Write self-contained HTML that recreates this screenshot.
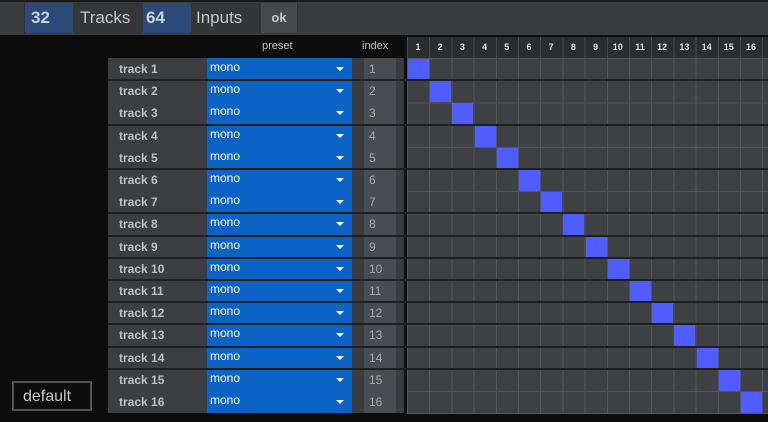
<html><head><style>
body{margin:0;width:768px;height:422px;background:#0c0c0c;position:relative;overflow:hidden;font-family:"Liberation Sans",sans-serif}
.a{position:absolute}
.top{left:0;top:0;width:768px;height:35px;background:#3a3b3d;border-top:2px solid #1a1a1a;box-sizing:border-box}
.box{top:3px;height:30px;font-size:17px;line-height:30px;color:#c8c8c8}
.grid{left:407px;top:58px;width:361px;height:356px;background-color:#3e4044;
background-image:repeating-linear-gradient(90deg,#54565a 0 1px,transparent 1px 22.2px),repeating-linear-gradient(180deg,#54565a 0 1px,transparent 1px 22.2px)}
.hd{left:407px;top:37px;width:361px;height:21px;background:#2c2d2f;
background-image:repeating-linear-gradient(90deg,#4a4b4d 0 1px,transparent 1px 22.2px)}
.hn{top:37px;width:22px;height:21px;line-height:21px;text-align:center;color:#e0e0e0;font-size:9px;font-weight:bold}
.r{left:108px;width:296px;height:22.2px;font-size:12px;line-height:22px}
.n{left:0;width:99px;height:100%;background:#3c3e42;color:#c0c0c0;font-weight:bold;padding-left:11px;box-sizing:border-box}
.p{left:99px;width:145px;height:100%;background:#0b63c6;color:#fff;padding-left:3px;box-sizing:border-box;line-height:19px}
.p:after{content:"";position:absolute;right:8px;top:9px;border-left:4px solid transparent;border-right:4px solid transparent;border-top:4px solid #fff}
.g{left:244px;width:12px;height:100%;background:#3a3c40}
.i{left:256px;width:32px;height:100%;background:#4a4c52;color:#aaa;padding-left:5px;box-sizing:border-box}
.e{left:288px;width:8px;height:100%;background:#3a3c40}
.sep{left:108px;width:660px;height:2px;background:#1e1f21}
.b{width:21px;height:21px;background:#4f5cff}
</style></head><body>
<div class="a top"></div>
<div class="a" style="left:24px;top:3px;width:274px;height:30px;background:#2f3032"></div>
<div class="a box" style="left:25px;width:48px;background:#2c4a78;color:#c8d0dc;font-weight:bold;padding-left:6px;box-sizing:border-box">32</div>
<div class="a box" style="left:73px;width:70px;background:#343638;padding-left:7px;box-sizing:border-box">Tracks</div>
<div class="a box" style="left:143px;width:48px;background:#2c4a78;color:#c8d0dc;font-weight:bold;padding-left:3px;box-sizing:border-box">64</div>
<div class="a box" style="left:191px;width:68px;background:#343638;padding-left:5px;box-sizing:border-box">Inputs</div>
<div class="a box" style="left:261px;width:36px;background:#48494b;font-size:13px;font-weight:bold;text-align:center">ok</div>
<div class="a" style="left:262px;top:40px;color:#c0c0c0;font-size:11px">preset</div>
<div class="a" style="left:362px;top:40px;color:#c0c0c0;font-size:11px">index</div>
<div class="a hd"></div>
<div class="a" style="left:404px;top:37px;width:3px;height:377px;background:#111"></div>
<div class="a grid"></div>
<div id="rows"></div>
<div class="a" style="left:12px;top:381px;width:80px;height:30px;border:2px solid #555;color:#c8c8c8;font-size:16px;line-height:28px;padding-left:9px;box-sizing:border-box">default</div>
<script>
var h='',P=22.2;
for(var k=0;k<16;k++){h+='<div class="a hn" style="left:'+(407+k*P)+'px">'+(k+1)+'</div>';}
for(var i=0;i<16;i++){var t=58+i*P;
h+='<div class="a r" style="top:'+t+'px"><div class="a n">track '+(i+1)+'</div><div class="a p">mono</div><div class="a g"></div><div class="a i">'+(i+1)+'</div><div class="a e"></div></div>';
h+='<div class="a b" style="left:'+(408+i*P)+'px;top:'+(t+1)+'px"></div>';}
[1,3,5,7,8,9,10,11,12,13,14].forEach(function(j){h+='<div class="a sep" style="top:'+(57+j*P)+'px"></div>';});
document.getElementById('rows').innerHTML=h;
</script>
</body></html>
